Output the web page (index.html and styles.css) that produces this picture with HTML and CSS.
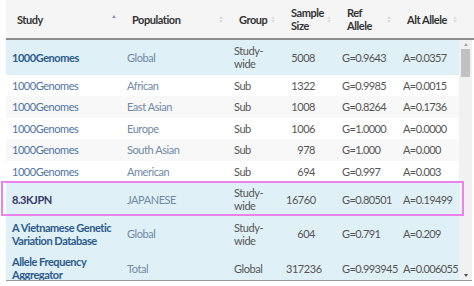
FILE: index.html
```html
<!DOCTYPE html>
<html lang="en">
<head>
  <meta charset="UTF-8">
  <title>Allele Frequency</title>
  <link rel="stylesheet" href="styles.css">
</head>
<body>
  <div class="freq-wrapper">
    <table class="freq-head">
      <colgroup>
        <col class="c-study"><col class="c-pop"><col class="c-group"><col class="c-size"><col class="c-ref"><col class="c-alt"><col class="c-gutter">
      </colgroup>
      <tr>
        <th><div class="th-inner"><span>Study</span><span class="sort active"><i class="up"></i></span></div></th>
        <th><div class="th-inner"><span>Population</span><span class="sort"><i class="up"></i><i class="down"></i></span></div></th>
        <th><div class="th-inner"><span>Group</span><span class="sort"><i class="up"></i><i class="down"></i></span></div></th>
        <th><div class="th-inner"><span>Sample<br>Size</span><span class="sort"><i class="up"></i><i class="down"></i></span></div></th>
        <th><div class="th-inner"><span>Ref<br>Allele</span><span class="sort"><i class="up"></i><i class="down"></i></span></div></th>
        <th><div class="th-inner"><span class="nowrap">Alt Allele</span><span class="sort"><i class="up"></i><i class="down"></i></span></div></th>
        <th class="gutter"></th>
      </tr>
    </table>

    <div class="freq-body">
      <table class="freq-rows">
        <colgroup>
          <col class="c-study"><col class="c-pop"><col class="c-group"><col class="c-size"><col class="c-ref-body"><col>
        </colgroup>
        <tr class="blue">
          <td><a class="study strong">1000Genomes</a></td>
          <td class="pop">Global</td>
          <td>Study-<br>wide</td>
          <td class="num">5008</td>
          <td class="allele">G=0.9643</td>
          <td class="allele">A=0.0357</td>
        </tr>
        <tr>
          <td><a class="study">1000Genomes</a></td>
          <td class="pop">African</td>
          <td>Sub</td>
          <td class="num">1322</td>
          <td class="allele">G=0.9985</td>
          <td class="allele">A=0.0015</td>
        </tr>
        <tr class="grey">
          <td><a class="study">1000Genomes</a></td>
          <td class="pop">East Asian</td>
          <td>Sub</td>
          <td class="num">1008</td>
          <td class="allele">G=0.8264</td>
          <td class="allele">A=0.1736</td>
        </tr>
        <tr>
          <td><a class="study">1000Genomes</a></td>
          <td class="pop">Europe</td>
          <td>Sub</td>
          <td class="num">1006</td>
          <td class="allele">G=1.0000</td>
          <td class="allele">A=0.0000</td>
        </tr>
        <tr class="grey">
          <td><a class="study">1000Genomes</a></td>
          <td class="pop">South Asian</td>
          <td>Sub</td>
          <td class="num">978</td>
          <td class="allele">G=1.000</td>
          <td class="allele">A=0.000</td>
        </tr>
        <tr>
          <td><a class="study">1000Genomes</a></td>
          <td class="pop">American</td>
          <td>Sub</td>
          <td class="num">694</td>
          <td class="allele">G=0.997</td>
          <td class="allele">A=0.003</td>
        </tr>
        <tr class="blue">
          <td><a class="study strong visited">8.3KJPN</a></td>
          <td class="pop">JAPANESE</td>
          <td>Study-<br>wide</td>
          <td class="num">16760</td>
          <td class="allele">G=0.80501</td>
          <td class="allele">A=0.19499</td>
        </tr>
        <tr class="blue">
          <td><a class="study strong">A Vietnamese Genetic Variation Database</a></td>
          <td class="pop">Global</td>
          <td>Study-<br>wide</td>
          <td class="num">604</td>
          <td class="allele">G=0.791</td>
          <td class="allele">A=0.209</td>
        </tr>
        <tr class="blue">
          <td><a class="study strong">Allele Frequency Aggregator</a></td>
          <td class="pop">Total</td>
          <td>Global</td>
          <td class="num">317236</td>
          <td class="allele">G=0.993945</td>
          <td class="allele">A=0.006055</td>
        </tr>
      </table>

      <div class="scrollbar">
        <span class="arrow up-arrow"></span>
        <span class="thumb"></span>
        <span class="track"></span>
        <span class="arrow down-arrow"></span>
      </div>
    </div>

    <div class="highlight"></div>
  </div>
</body>
</html>
```

FILE: styles.css
```css
html, body {
  margin: 0;
  padding: 0;
  width: 100%;
  height: 100%;
  overflow: hidden;
  background: white;
}

.freq-wrapper {
  position: relative;
  font-family: Lato, "Open Sans", sans-serif;
  font-size: 11px;
  letter-spacing: -0.45px;
  color: #555;
  padding-left: 6px;
}

table {
  border-collapse: collapse;
  table-layout: fixed;
}

.c-study { width: 115px; }
.c-pop { width: 107px; }
.c-group { width: 52px; }
.c-size { width: 56px; }
.c-ref { width: 60px; }
.c-ref-body { width: 62px; }
.c-alt { width: 66px; }

.freq-head {
  width: 468px;
  background-color: #f5f5f5;
  border-bottom: 2px solid #8c8c8c;
}

.freq-head th {
  height: 38px;
  padding: 0 5px 0 11px;
  text-align: left;
  font-weight: bold;
  color: #333;
  line-height: 13px;
}

.freq-head th.gutter {
  padding: 0;
}

.th-inner {
  display: flex;
  align-items: center;
  justify-content: space-between;
}

.nowrap {
  white-space: nowrap;
}

.sort {
  display: flex;
  flex-direction: column;
  gap: 1px;
}

.sort i {
  display: block;
  width: 0;
  height: 0;
  border-left: 2.5px solid transparent;
  border-right: 2.5px solid transparent;
}

.sort .up {
  border-bottom: 3px solid #dcdcdc;
}

.sort .down {
  border-top: 3px solid #dcdcdc;
}

.sort.active {
  margin-top: -6px;
}

.sort.active .up {
  border-bottom-color: #8a93c4;
}

.freq-body {
  display: flex;
  height: 240px;
  overflow: hidden;
  border-bottom: 1px solid #9a9a9a;
  width: 466px;
}

.freq-rows {
  width: 453px;
  flex: none;
  align-self: flex-start;
}

.freq-rows td {
  padding: 4.25px 6px;
  line-height: 13px;
  vertical-align: middle;
  white-space: nowrap;
}

.freq-rows td:first-child {
  white-space: normal;
}

.freq-rows td:last-child {
  padding-left: 5px;
}

.freq-rows td.allele {
  letter-spacing: -0.6px;
}

.freq-rows tr {
  background-color: white;
}

.freq-rows tr.grey {
  background-color: #f8f8f8;
}

.freq-rows tr.blue {
  background-color: #e0f0f7;
}

.freq-rows td.num {
  text-align: right;
  padding-right: 21px;
}

.study {
  color: #4d74a6;
  text-decoration: none;
}

.study.strong {
  font-weight: bold;
  color: #2c5b8c;
}

.study.visited {
  color: #3b3868;
}

.pop {
  color: #6f8aa6;
}

.scrollbar {
  width: 13px;
  display: flex;
  flex-direction: column;
  align-items: center;
  background-color: #f1f1f1;
}

.arrow {
  display: block;
  width: 0;
  height: 0;
  border-left: 2px solid transparent;
  border-right: 2px solid transparent;
  margin: 3px 0;
}

.up-arrow {
  border-bottom: 3px solid #a3a3a3;
}

.down-arrow {
  border-top: 3px solid #505050;
}

.thumb {
  display: block;
  width: 9px;
  height: 28px;
  background-color: #c1c1c1;
}

.track {
  flex: 1;
}

.highlight {
  position: absolute;
  left: 1px;
  top: 181px;
  width: 459px;
  height: 31px;
  border: 2px solid #ec82ec;
  pointer-events: none;
}
```
